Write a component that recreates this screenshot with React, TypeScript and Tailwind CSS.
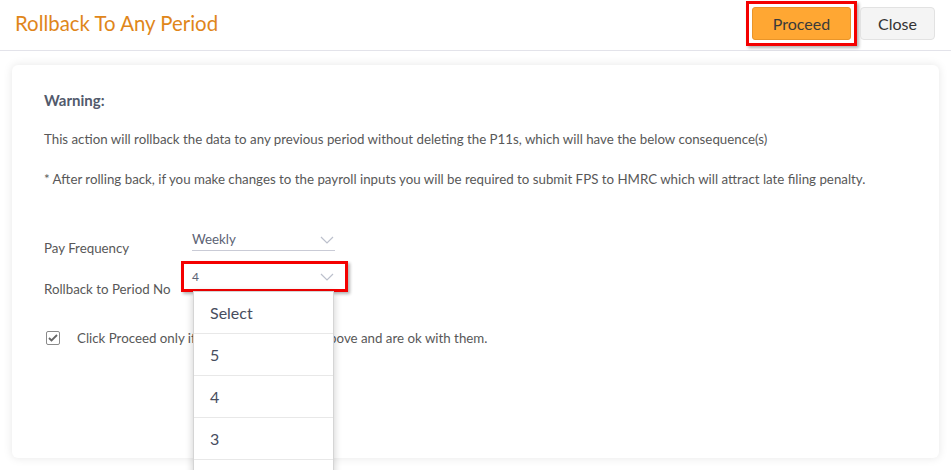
import React from "react";

const Chevron = () => (
  <svg width="14" height="8" viewBox="0 0 14 8" fill="none" className="text-[#bcc0cc]">
    <path d="M1 1l6 6 6-6" stroke="currentColor" strokeWidth="1.2" />
  </svg>
);

export default function App() {
  const options = ["Select", "5", "4", "3", "2"];
  return (
    <div className="w-[951px] h-[470px] overflow-hidden bg-white font-['Lato',sans-serif] text-[#585858]">
      {/* Header */}
      <div className="h-[51px] flex items-start justify-between pl-[15px] pr-[16px] pt-[1px] border-b border-[#e3e3ea]">
        <h1 className="mt-[10px] text-[20.4px] leading-[24px] text-[#e0861a]">Rollback To Any Period</h1>
        <div className="flex items-start">
          <div className="border-[3px] border-[#f40000] p-[3px] shadow-[2px_2px_3px_rgba(0,0,0,0.3)]">
            <button className="w-[99px] h-[33px] bg-[#ffa733] border border-[#e9952a] rounded-[3px] text-[16px] text-[#3a3a3a]">
              Proceed
            </button>
          </div>
          <button className="ml-[3px] mt-[6px] w-[75px] h-[33px] bg-[#f4f4f4] border border-[#e2e2e2] rounded-[4px] text-[16px] text-[#333]">
            Close
          </button>
        </div>
      </div>

      {/* Body */}
      <div className="pt-[14px] px-[12px]">
        <div className="relative h-[393px] bg-white rounded-[6px] shadow-[0_0_10px_rgba(0,0,0,0.1)] pl-[32px] pt-[25px]">
          <h2 className="text-[15px] leading-[20px] font-bold text-[#525a6c]">Warning:</h2>
          <p className="mt-[20px] text-[13.3px] leading-[18px]">
            This action will rollback the data to any previous period without deleting the P11s, which will have the below consequence(s)
          </p>
          <p className="mt-[22px] text-[13.3px] leading-[18px]">
            * After rolling back, if you make changes to the payroll inputs you will be required to submit FPS to HMRC which will attract late filing penalty.
          </p>

          {/* Pay Frequency */}
          <div className="mt-[41px] flex items-start">
            <label className="mt-[10px] w-[148px] text-[13.3px] leading-[18px]">Pay Frequency</label>
            <div className="w-[143px] h-[22px] flex items-center justify-between pr-[1px] border-b border-[#c9cbd6] text-[13.3px] text-[#5c6374]">
              <span>Weekly</span>
              <Chevron />
            </div>
          </div>

          {/* Rollback to Period */}
          <div className="mt-[4px] flex items-start">
            <label className="mt-[19px] w-[137px] text-[13.3px] leading-[18px]">Rollback to Period No</label>
            <div className="relative">
              <div className="w-[167px] h-[31px] border-[3px] border-[#f40000] shadow-[2px_2px_3px_rgba(0,0,0,0.3)] flex items-center justify-between pl-[8px] pr-[11px] text-[12px] text-[#5c6374]">
                <span>4</span>
                <Chevron />
              </div>
              <div className="absolute left-[12px] top-[30px] w-[141px] bg-white border border-[#d5d5d5] shadow-[0_2px_8px_rgba(0,0,0,0.2)] z-10">
                {options.map((o) => (
                  <div key={o} className="h-[42px] flex items-center pl-[16px] border-b border-[#e8e8e8] text-[16px] text-[#474d5e]">
                    {o}
                  </div>
                ))}
              </div>
            </div>
          </div>

          {/* Confirmation */}
          <div className="mt-[31px] flex items-center gap-[17px] pl-[2px]">
            <div className="w-[14px] h-[14px] border border-[#8a8a8a] rounded-[2px] flex items-center justify-center">
              <svg width="10" height="8" viewBox="0 0 10 8">
                <path d="M1 4l2.5 2.5L9 1" stroke="#666" strokeWidth="1.8" fill="none" />
              </svg>
            </div>
            <span className="text-[13.3px] leading-[18px]">Click Proceed only if you have read all the above and are ok with them.</span>
          </div>
        </div>
      </div>
    </div>
  );
}
